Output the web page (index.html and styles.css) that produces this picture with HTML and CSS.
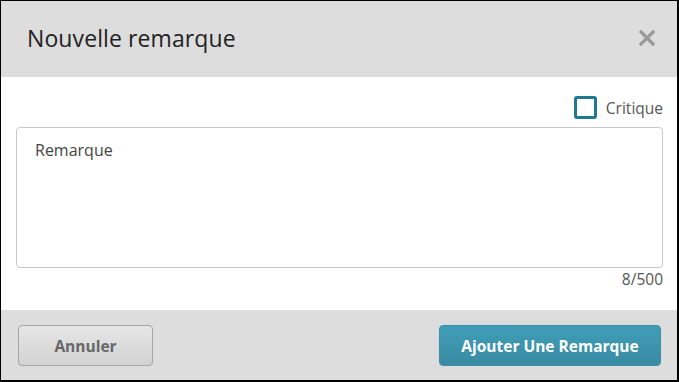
FILE: index.html
```html
<!DOCTYPE html>
<html lang="fr">
<head>
<meta charset="utf-8">
<title>Nouvelle remarque</title>
<link rel="stylesheet" href="styles.css">
</head>
<body>
<div class="dialog">
  <header class="dialog-header">
    <h1 class="dialog-title">Nouvelle remarque</h1>
    <button class="close-btn" aria-label="Fermer">
      <svg width="16" height="16" viewBox="0 0 16 16"><path d="M2 2L14 14M14 2L2 14" stroke="#999" stroke-width="3.2" stroke-linecap="square"/></svg>
    </button>
  </header>
  <div class="dialog-body">
    <label class="check-row">
      <span class="checkbox"></span>
      <span class="check-label">Critique</span>
    </label>
    <div class="textarea">Remarque</div>
    <div class="counter">8/500</div>
  </div>
  <footer class="dialog-footer">
    <button class="btn btn-cancel">Annuler</button>
    <button class="btn btn-primary">Ajouter Une Remarque</button>
  </footer>
</div>
</body>
</html>
```
FILE: styles.css
```css
html, body {
  margin: 0;
  padding: 0;
}
body {
  font-family: "Open Sans", "Noto Sans", sans-serif;
  background: #fff;
}
.dialog {
  box-sizing: border-box;
  width: 679px;
  height: 382px;
  border: 1px solid #000;
  border-right-width: 2px;
  border-bottom-width: 2px;
  display: flex;
  flex-direction: column;
  background: #fff;
}
.dialog-header {
  height: 76px;
  background: #dddddd;
  display: flex;
  align-items: center;
  justify-content: space-between;
  padding: 0 22px 0 26px;
  flex-shrink: 0;
}
.dialog-title {
  margin: 0;
  font-size: 23px;
  font-weight: 400;
  color: #222;
  letter-spacing: 0.1px;
  padding-bottom: 2px;
}
.close-btn {
  border: 0;
  background: none;
  padding: 0;
  width: 16px;
  height: 16px;
  display: flex;
  margin-bottom: 2px;
}
.dialog-body {
  flex: 1;
  padding: 19px 14px 0 15px;
  display: flex;
  flex-direction: column;
}
.check-row {
  align-self: flex-end;
  display: flex;
  align-items: center;
  gap: 9px;
  height: 23px;
}
.checkbox {
  box-sizing: border-box;
  width: 23px;
  height: 23px;
  border: 3px solid #1e7a8e;
  border-radius: 3px;
  background: #fff;
}
.check-label {
  font-size: 15.5px;
  color: #555;
}
.textarea {
  box-sizing: border-box;
  margin-top: 8px;
  height: 141px;
  border: 1px solid #c8c8c8;
  border-radius: 4px;
  padding: 11px 18px;
  font-size: 16px;
  color: #444;
}
.counter {
  text-align: right;
  font-size: 15.5px;
  color: #555;
  margin-top: 0;
}
.dialog-footer {
  height: 70px;
  background: #dddddd;
  display: flex;
  align-items: flex-start;
  justify-content: space-between;
  padding: 15px 16px 0 17px;
  box-sizing: border-box;
  flex-shrink: 0;
}
.btn {
  box-sizing: border-box;
  height: 41px;
  border-radius: 4px;
  font-family: "Open Sans", "Noto Sans", sans-serif;
  font-size: 15.5px;
  font-weight: 700;
}
.btn-cancel {
  width: 135px;
  border: 1px solid #a5a5a5;
  background: linear-gradient(#e6e6e6, #d2d2d2);
  color: #666;
}
.btn-primary {
  width: 222px;
  border: 1px solid #3a8fa7;
  background: linear-gradient(#409db7, #3a8ba3);
  color: #fff;
}
```
